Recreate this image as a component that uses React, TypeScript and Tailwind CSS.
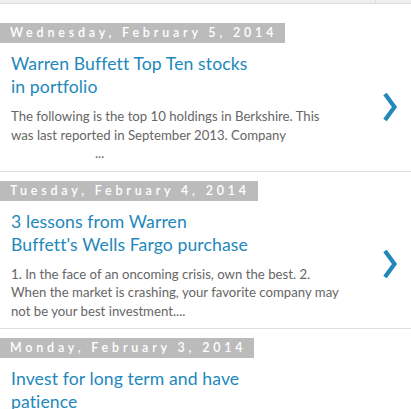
import React from "react";

interface Post {
  date: string;
  title: string[];
  snippet: string[];
  trail?: boolean;
}

const posts: Post[] = [
  {
    date: "Wednesday, February 5, 2014",
    title: ["Warren Buffett Top Ten stocks", "in portfolio"],
    snippet: [
      "The following is the top 10 holdings in Berkshire. This",
      "was last reported in September 2013. Company",
    ],
    trail: true,
  },
  {
    date: "Tuesday, February 4, 2014",
    title: ["3 lessons from Warren", "Buffett's Wells Fargo purchase"],
    snippet: [
      "1. In the face of an oncoming crisis, own the best. 2.",
      "When the market is crashing, your favorite company may",
      "not be your best investment....",
    ],
  },
  {
    date: "Monday, February 3, 2014",
    title: ["Invest for long term and have", "patience"],
    snippet: [],
  },
];

const Arrow = () => (
  <svg width="16" height="30" viewBox="0 0 16 30" className="text-[#2288bb]">
    <path d="M3 2 L12.5 15 L3 28" fill="none" stroke="currentColor" strokeWidth="4.2" strokeLinejoin="miter" />
  </svg>
);

const PostItem: React.FC<{ post: Post; last?: boolean }> = ({ post, last }) => (
  <div className={`pt-[9px] ${last ? "" : "pb-[8px] border-b border-[#dddddd]"}`}>
    <div className="w-fit h-[20px] bg-[#bbbbbb] pl-[10px] pr-[8px] text-[12.5px] leading-[20px] font-semibold tracking-[3.8px] text-white">
      {post.date}
    </div>
    <div className="flex items-center">
      <div className="flex-1 pl-[11px]">
        <h3 className="mt-[9px] text-[17.6px] leading-[23px] tracking-[0.1px] text-[#2288bb]">
          {post.title.map((line) => (
            <div key={line}>{line}</div>
          ))}
        </h3>
        {post.snippet.length > 0 && (
          <div className="mt-[9px] text-[13.2px] leading-[18.5px] text-[#666666]">
            {post.snippet.map((line) => (
              <div key={line}>{line}</div>
            ))}
            {post.trail && <div className="pl-[84px]">...</div>}
          </div>
        )}
      </div>
      {post.snippet.length > 0 && (
        <div className="w-[34px] pl-[5px] pt-[8px]">
          <Arrow />
        </div>
      )}
    </div>
  </div>
);

export default function App() {
  return (
    <div className="w-[411px] h-[409px] overflow-hidden bg-white font-['Lato',sans-serif]">
      <div className="flex h-[4px] bg-[#eeeeee] border-b border-[#dddddd]">
        <div className="w-[376px] border-r border-[#dddddd]" />
      </div>
      <div className="pt-[10px]">
        {posts.map((p, i) => (
          <PostItem key={p.date} post={p} last={i === posts.length - 1} />
        ))}
      </div>
    </div>
  );
}
